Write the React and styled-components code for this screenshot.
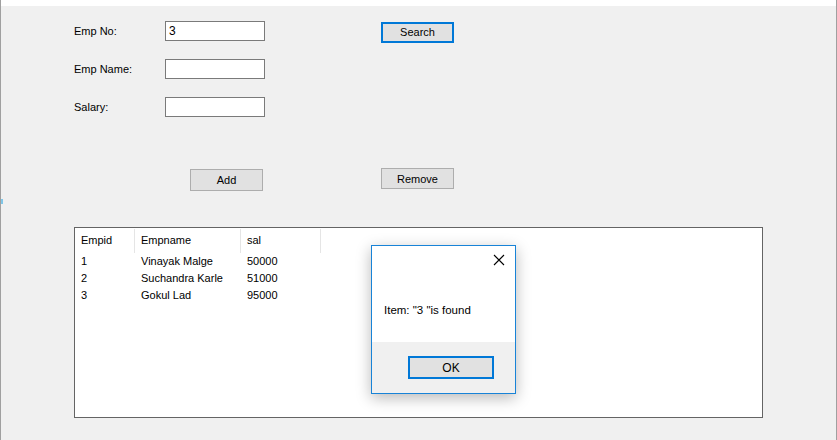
import React from 'react';
import styled, { createGlobalStyle } from 'styled-components';

const GlobalStyle = createGlobalStyle`
  html, body {
    margin: 0;
    padding: 0;
    background: #f0f0f0;
  }
  body {
    font-family: "Liberation Sans", Arial, sans-serif;
    font-size: 11px;
    color: #000;
  }
`;

const Window = styled.div`
  position: relative;
  width: 837px;
  height: 440px;
  box-sizing: border-box;
  background: #f0f0f0;
  border-left: 1px solid #a0a0a0;
  border-right: 1px solid #a0a0a0;
  overflow: hidden;
`;

const TopStrip = styled.div`
  height: 6px;
  background: #ffffff;
`;

const EdgeMark = styled.div`
  position: absolute;
  left: 0;
  top: 199px;
  width: 2px;
  height: 5px;
  background: #7fc6e8;
`;

const Form = styled.div`
  display: grid;
  grid-template-columns: 91px 100px 116px 73px;
  grid-auto-rows: 20px;
  row-gap: 18px;
  align-items: center;
  padding: 15px 0 0 73px;
`;

const Label = styled.span`
  font-size: 11px;
`;

const TextBox = styled.div`
  box-sizing: border-box;
  height: 20px;
  border: 1px solid #7a7a7a;
  background: #fff;
  padding: 2px 3px;
  font-size: 12px;
  line-height: 15px;
`;

const Button = styled.button`
  box-sizing: border-box;
  width: 73px;
  height: ${p => p.$h || 21}px;
  margin-top: ${p => p.$dy || 0}px;
  padding: 0;
  font-family: "Liberation Sans", Arial, sans-serif;
  font-size: 11px;
  color: #000;
  background: #e1e1e1;
  border: ${p => (p.$focused ? '2px solid #0078d7' : '1px solid #adadad')};
  border-radius: 0;
`;

const ActionRow = styled.div`
  display: flex;
  align-items: flex-start;
  padding: 51px 0 0 189px;
  gap: 118px;
`;

const ListView = styled.div`
  box-sizing: border-box;
  margin: 36px 0 0 73px;
  width: 689px;
  height: 191px;
  border: 1px solid #646464;
  background: #fff;
`;

const Header = styled.div`
  display: flex;
  height: 24px;
  margin-top: 1px;
`;

const HeadCell = styled.div`
  box-sizing: border-box;
  width: ${p => p.$w}px;
  padding-left: 6px;
  line-height: 23px;
  border-right: 1px solid #e5e5e5;
`;

const Row = styled.div`
  display: flex;
  height: 17px;
  line-height: 17px;
`;

const Cell = styled.div`
  box-sizing: border-box;
  width: ${p => p.$w}px;
  padding-left: 6px;
  white-space: nowrap;
`;

const Dialog = styled.div`
  position: absolute;
  left: 370px;
  top: 245px;
  width: 145px;
  height: 149px;
  box-sizing: border-box;
  border: 1px solid #1883d7;
  background: #fff;
  box-shadow: 0 4px 14px rgba(0, 0, 0, 0.28);
  display: flex;
  flex-direction: column;
`;

const DialogBody = styled.div`
  position: relative;
  height: 96px;
  padding: 0 0 0 12px;
  display: flex;
  align-items: flex-end;
`;

const Message = styled.div`
  font-size: 11.5px;
  padding-bottom: 26px;
`;

const CloseIcon = styled.svg`
  position: absolute;
  right: 10px;
  top: 8px;
`;

const DialogFooter = styled.div`
  flex: 1;
  background: #f0f0f0;
  display: flex;
  justify-content: center;
  padding-top: 14px;
  padding-left: 15px;
`;

const OkButton = styled(Button)`
  width: 86px;
  height: 23px;
  font-size: 12px;
`;

const cols = [60, 106, 80];
const rows = [
  ['1', 'Vinayak Malge', '50000'],
  ['2', 'Suchandra Karle', '51000'],
  ['3', 'Gokul Lad', '95000'],
];

export default function App() {
  return (
    <Window>
      <GlobalStyle />
      <TopStrip />
      <EdgeMark />
      <Form>
        <Label>Emp No:</Label>
        <TextBox>3</TextBox>
        <span />
        <Button $focused $dy={2}>Search</Button>
        <Label>Emp Name:</Label>
        <TextBox />
        <span />
        <span />
        <Label>Salary:</Label>
        <TextBox />
      </Form>
      <ActionRow>
        <Button $dy={1} $h={22}>Add</Button>
        <Button>Remove</Button>
      </ActionRow>
      <ListView>
        <Header>
          <HeadCell $w={cols[0]}>Empid</HeadCell>
          <HeadCell $w={cols[1]}>Empname</HeadCell>
          <HeadCell $w={cols[2]}>sal</HeadCell>
        </Header>
        {rows.map(r => (
          <Row key={r[0]}>
            {r.map((v, i) => (
              <Cell key={i} $w={cols[i]}>{v}</Cell>
            ))}
          </Row>
        ))}
      </ListView>
      <Dialog>
        <DialogBody>
          <CloseIcon width="12" height="12" viewBox="0 0 12 12">
            <path d="M1 1 L11 11 M11 1 L1 11" stroke="#000" strokeWidth="1.1" fill="none" />
          </CloseIcon>
          <Message>Item: "3 "is found</Message>
        </DialogBody>
        <DialogFooter>
          <OkButton $focused>OK</OkButton>
        </DialogFooter>
      </Dialog>
    </Window>
  );
}
